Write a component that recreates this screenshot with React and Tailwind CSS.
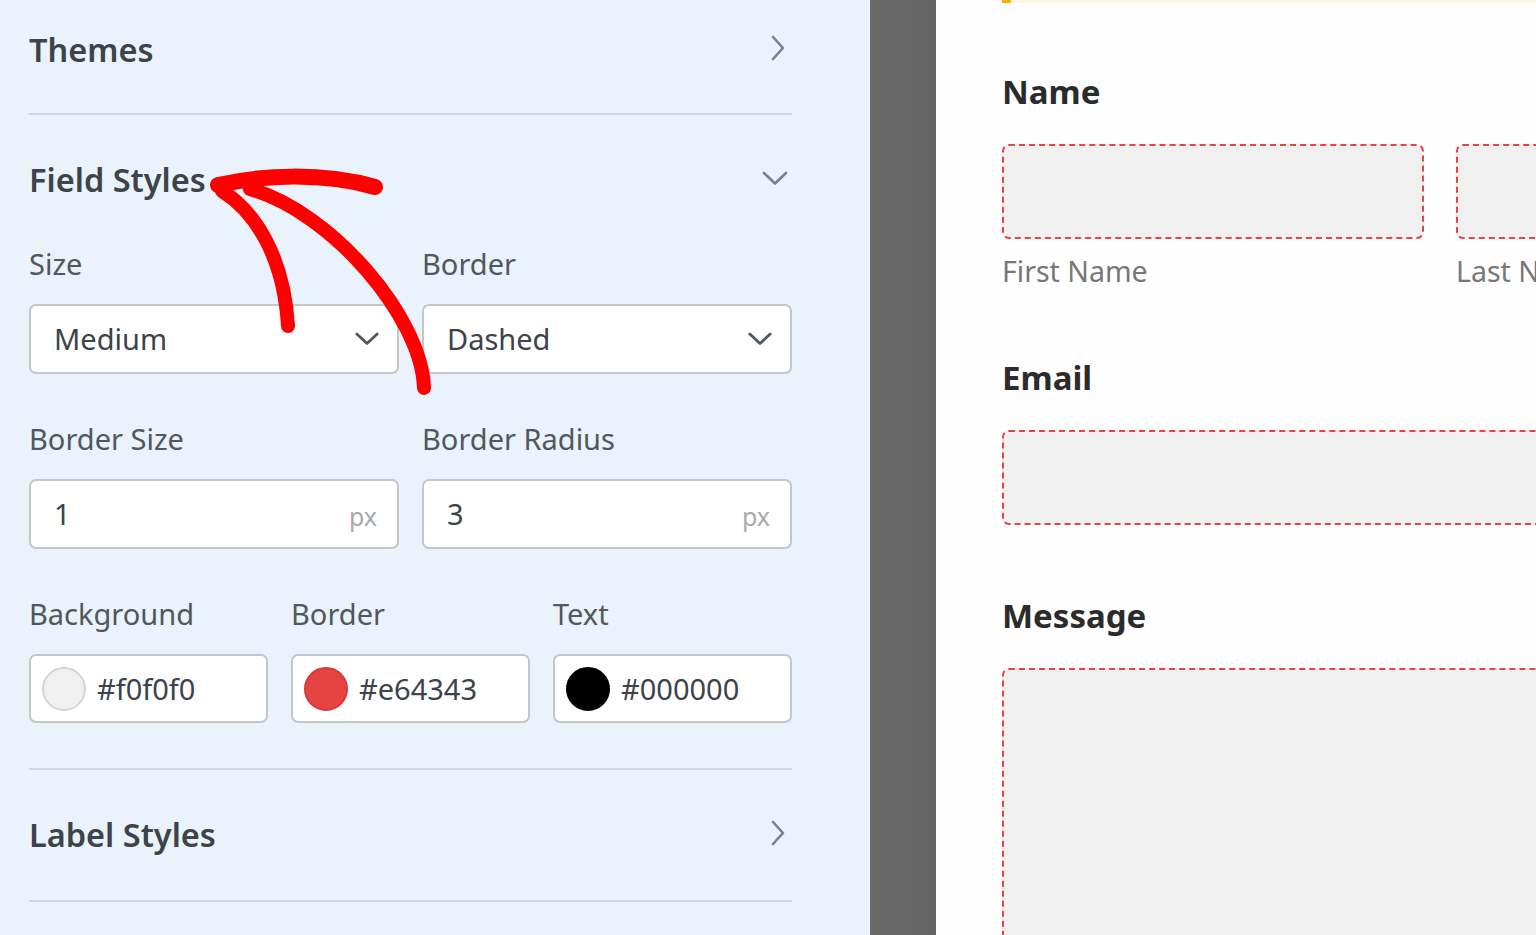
import React from "react";

const font = { fontFamily: '"Noto Sans", "Open Sans", sans-serif' };

function ChevronRight() {
  return (
    <svg width="16" height="26" viewBox="0 0 16 26" className="shrink-0">
      <polyline points="3,2 13,13 3,24" fill="none" stroke="#7a8087" strokeWidth="2.6" strokeLinecap="round" strokeLinejoin="round" />
    </svg>
  );
}

function ChevronDown({ w = 26, color = "#7a8087", sw = 2.6 }) {
  return (
    <svg width={w} height={w / 2 + 2} viewBox="0 0 26 15" className="shrink-0">
      <polyline points="2,2 13,12.5 24,2" fill="none" stroke={color} strokeWidth={sw} strokeLinecap="round" strokeLinejoin="round" />
    </svg>
  );
}

function Label({ children }) {
  return <div className="text-[29px] leading-[38px] text-[#50575e]">{children}</div>;
}

function Select({ value }) {
  return (
    <div className="mt-[21px] h-[70px] rounded-[7px] border-2 border-[#c3c6ca] bg-white flex items-center justify-between pl-[23px] pr-[18px]">
      <span className="text-[29px] text-[#3c434a]">{value}</span>
      <ChevronDown w={24} color="#50575e" sw={3} />
    </div>
  );
}

function NumInput({ value }) {
  return (
    <div className="mt-[21px] h-[70px] rounded-[7px] border-2 border-[#c3c6ca] bg-white flex items-center justify-between pl-[23px] pr-[20px]">
      <span className="text-[29px] text-[#3c434a]">{value}</span>
      <span className="text-[25px] text-[#a7aaad] pt-[6px]">px</span>
    </div>
  );
}

function ColorInput({ color, border, value }) {
  return (
    <div className="mt-[21px] h-[69px] rounded-[7px] border-2 border-[#c3c6ca] bg-white flex items-center pl-[11px] gap-[11px]">
      <span className={`w-[44px] h-[44px] rounded-full border-2 ${color} ${border}`} />
      <span className="text-[29px] text-[#3c434a]">{value}</span>
    </div>
  );
}

function Divider() {
  return <div className="h-[2px] bg-[#cfd6df]" />;
}

function Header({ title, children }) {
  return (
    <div className="h-[130px] flex items-center justify-between pr-[4px]">
      <span className="text-[32.5px] font-semibold text-[#3c434a]">{title}</span>
      <div className="-mt-[4px]">{children}</div>
    </div>
  );
}

function RightLabel({ children, className = "" }) {
  return <div className={`text-[33px] leading-[44px] font-bold text-[#2b2b2b] ${className}`}>{children}</div>;
}

export default function App() {
  return (
    <div className="relative w-[1536px] h-[935px] overflow-hidden flex" style={font}>
      {/* Left panel */}
      <div className="w-[870px] shrink-0 bg-[#eaf2fc] pl-[29px] pr-[78px]">
        <div className="h-[100px] flex items-center justify-between pr-[6px]">
          <span className="text-[32.5px] font-semibold text-[#3c434a]">Themes</span>
          <div className="-mt-[5px]"><ChevronRight /></div>
        </div>
        <div className="mt-[13px]">
          <Divider />
        </div>
        <Header title="Field Styles">
          <ChevronDown />
        </Header>

        <div className="grid grid-cols-2 gap-x-[23px]">
          <div>
            <Label>Size</Label>
            <Select value="Medium" />
          </div>
          <div>
            <Label>Border</Label>
            <Select value="Dashed" />
          </div>
        </div>

        <div className="grid grid-cols-2 gap-x-[23px] mt-[46px]">
          <div>
            <Label>Border Size</Label>
            <NumInput value="1" />
          </div>
          <div>
            <Label>Border Radius</Label>
            <NumInput value="3" />
          </div>
        </div>

        <div className="grid grid-cols-3 gap-x-[23px] mt-[46px]">
          <div>
            <Label>Background</Label>
            <ColorInput color="bg-[#f0f0f0]" border="border-[#d5d5d5]" value="#f0f0f0" />
          </div>
          <div>
            <Label>Border</Label>
            <ColorInput color="bg-[#e64343]" border="border-[#d83a3a]" value="#e64343" />
          </div>
          <div>
            <Label>Text</Label>
            <ColorInput color="bg-black" border="border-black" value="#000000" />
          </div>
        </div>

        <div className="mt-[45px]">
          <Divider />
        </div>
        <Header title="Label Styles">
          <div className="pr-[2px]"><ChevronRight /></div>
        </Header>
        <Divider />
      </div>

      {/* Gray strip */}
      <div className="w-[66px] shrink-0 bg-gradient-to-r from-[#6a6a6a] to-[#636363]" />

      {/* Right panel */}
      <div className="flex-1 bg-[#fefefe] overflow-hidden pl-[66px]">
        <div className="w-[876px]">
          <div className="h-[3px] flex">
            <div className="w-[9px] bg-[#f5b400]" />
            <div className="flex-1 bg-[#fdf7e2]" />
          </div>
          <RightLabel className="mt-[67px]">Name</RightLabel>
          <div className="mt-[30px] grid grid-cols-2 gap-x-[32px]">
            <div>
              <div className="h-[95px] rounded-[7px] border-2 border-dashed border-[#e64343] bg-[#f0f0f0]" />
              <div className="mt-[13px] text-[28.5px] leading-[38px] text-[#777]">First Name</div>
            </div>
            <div>
              <div className="h-[95px] rounded-[7px] border-2 border-dashed border-[#e64343] bg-[#f0f0f0]" />
              <div className="mt-[13px] text-[28.5px] leading-[38px] text-[#777]">Last Name</div>
            </div>
          </div>
          <RightLabel className="mt-[66px]">Email</RightLabel>
          <div className="mt-[30px] h-[95px] rounded-[7px] border-2 border-dashed border-[#e64343] bg-[#f0f0f0]" />
          <RightLabel className="mt-[69px]">Message</RightLabel>
          <div className="mt-[30px] h-[320px] rounded-[7px] border-2 border-dashed border-[#e64343] bg-[#f0f0f0]" />
        </div>
      </div>

      {/* Red hand-drawn arrow overlay */}
      <svg className="absolute left-0 top-0 pointer-events-none" width="870" height="935" viewBox="0 0 870 935">
        <g fill="none" stroke="#ff0000" strokeLinecap="round" strokeLinejoin="round">
          <path d="M 218 185 C 262 175, 322 172, 375 187" strokeWidth="16" />
          <path d="M 222 191 C 256 212, 284 258, 288 326" strokeWidth="14" />
          <path d="M 250 189 C 332 212, 422 318, 424 388" strokeWidth="14" />
        </g>
      </svg>
    </div>
  );
}
